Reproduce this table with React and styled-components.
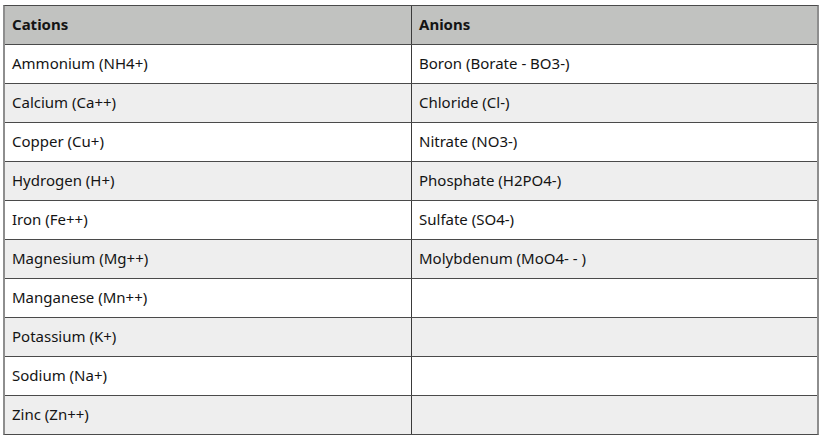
import React from 'react';
import styled, { createGlobalStyle } from 'styled-components';

const GlobalStyle = createGlobalStyle`
  body {
    margin: 0;
    background: #ffffff;
    font-family: "Noto Sans", "DejaVu Sans", sans-serif;
  }
`;

const Page = styled.div`
  padding: 5px 0 0 3px;
`;

const Table = styled.div`
  width: 816px;
  box-sizing: border-box;
  border-top: 1px solid #4a4a4a;
  border-bottom: 1px solid #4a4a4a;
  border-left: 2px solid #8e8e8e;
  border-right: 2px solid #8e8e8e;
`;

const Row = styled.div`
  display: grid;
  grid-template-columns: 406px 1fr;
  height: ${(p) => (p.first ? '38px' : '39px')};
  box-sizing: border-box;
  border-top: ${(p) => (p.first ? 'none' : '1px solid #4a4a4a')};
  background: ${(p) => p.bg};
`;

const Cell = styled.div`
  display: flex;
  align-items: center;
  padding: 0 0 2px 7px;
  font-size: 15px;
  font-weight: ${(p) => (p.head ? 700 : 400)};
  color: #141414;
  border-left: ${(p) => (p.right ? '1px solid #3a3a3a' : 'none')};
  white-space: nowrap;
`;

const cations = [
  'Ammonium (NH4+)',
  'Calcium (Ca++)',
  'Copper (Cu+)',
  'Hydrogen (H+)',
  'Iron (Fe++)',
  'Magnesium (Mg++)',
  'Manganese (Mn++)',
  'Potassium (K+)',
  'Sodium (Na+)',
  'Zinc (Zn++)',
];

const anions = [
  'Boron (Borate - BO3-)',
  'Chloride (Cl-)',
  'Nitrate (NO3-)',
  'Phosphate (H2PO4-)',
  'Sulfate (SO4-)',
  'Molybdenum (MoO4- - )',
];

export default function App() {
  return (
    <Page>
      <GlobalStyle />
      <Table>
        <Row first bg="#c1c2c0">
          <Cell head>Cations</Cell>
          <Cell head right>Anions</Cell>
        </Row>
        {cations.map((c, i) => (
          <Row key={c} bg={i % 2 === 0 ? '#ffffff' : '#eeeeee'}>
            <Cell>{c}</Cell>
            <Cell right>{anions[i] || ''}</Cell>
          </Row>
        ))}
      </Table>
    </Page>
  );
}
